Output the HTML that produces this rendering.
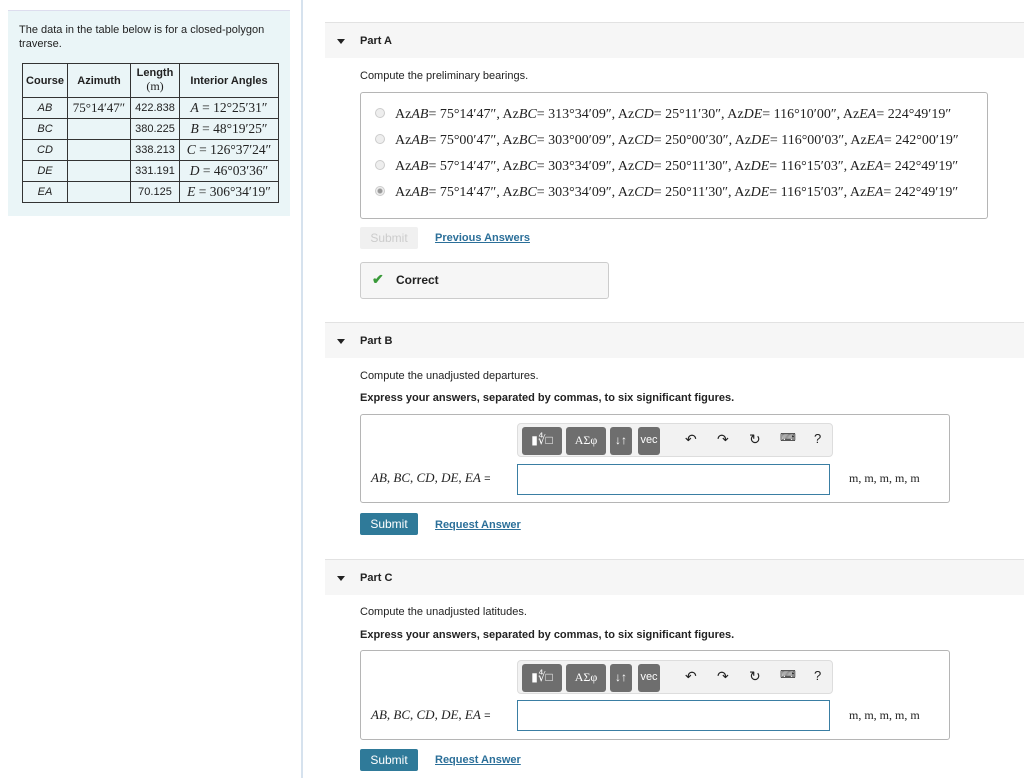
<!DOCTYPE html>
<html><head><meta charset="utf-8"><style>
*{box-sizing:border-box;margin:0;padding:0}
body{width:1024px;height:778px;background:#fff;font-family:"Liberation Sans",Arial,sans-serif;font-size:11px;color:#222;position:relative;overflow:hidden}
.abs{position:absolute}
.left{left:8px;top:10px;width:282px;height:206px;background:#eaf5f7;border-top:1px solid #dde}
table{position:absolute;left:14px;top:52px;border-collapse:collapse;font-size:11px;background:#eaf5f7}
td,th{border:1px solid #333;height:21px;padding:0 3px;text-align:center}
th{height:34px;font-weight:bold}
td.c{font-style:italic;}
.ser{font-family:"Liberation Serif","DejaVu Serif",serif;font-size:13.5px}
.divider{left:301px;top:0;width:2px;height:778px;background:#d6e2ee}
.hdr{left:325px;width:699px;height:36px;background:#f6f6f6;border-top:1px solid #e2e2e2}
.hdr b{position:absolute;left:35px;top:12px;font-size:11px}
.hdr i{position:absolute;left:12px;top:16px;width:0;height:0;border-left:4px solid transparent;border-right:4px solid transparent;border-top:5px solid #222}
.box{border:1px solid #b5b5b5;border-radius:3px;background:#fff}
.opt{position:absolute;left:14px;font-family:"Liberation Serif",serif;font-size:14px;white-space:nowrap}
.opt span.r{display:inline-block;width:10px;height:10px;border-radius:50%;border:1px solid #ccc;background:#eee;margin-right:10px;vertical-align:0px}
.btn{background:#2f7a99;color:#fff;font-size:12px;text-align:center;line-height:22px;border-radius:2px;width:58px;height:22px}
.lnk{color:#2b6f99;font-weight:bold;text-decoration:underline;font-size:11px}
.tb{height:34px;width:316px;background:#f2f2f2;border:1px solid #ddd;border-radius:4px}
.tk{position:absolute;top:3px;height:28px;background:#6e6e6e;color:#fff;border-radius:3px;text-align:center;line-height:26px;font-size:12px}
.ic{position:absolute;top:7px;font-size:14px;color:#222}
.inp{width:313px;height:31px;border:1px solid #3a7ea3;background:#fff}
</style></head><body>
<div class="abs left">
<div class="abs" style="left:11px;top:12px;font-size:11px;line-height:14px;width:260px">The data in the table below is for a closed-polygon traverse.</div>
<table>
<tr><th style="width:45px">Course</th><th style="width:63px">Azimuth</th><th style="width:49px">Length<br><span class="ser" style="font-size:12px;font-weight:normal">(m)</span></th><th style="width:99px">Interior Angles</th></tr>
<tr><td class="c">AB</td><td class="ser" style="font-size:13px;padding:0">75°14′47″</td><td>422.838</td><td class="ser"><i>A</i> = 12°25′31″</td></tr>
<tr><td class="c">BC</td><td></td><td>380.225</td><td class="ser"><i>B</i> = 48°19′25″</td></tr>
<tr><td class="c">CD</td><td></td><td>338.213</td><td class="ser"><i>C</i> = 126°37′24″</td></tr>
<tr><td class="c">DE</td><td></td><td>331.191</td><td class="ser"><i>D</i> = 46°03′36″</td></tr>
<tr><td class="c">EA</td><td></td><td>70.125</td><td class="ser"><i>E</i> = 306°34′19″</td></tr>
</table>
</div>
<div class="abs divider"></div>

<div class="abs hdr" style="top:22px"><i></i><b>Part A</b></div>
<div class="abs" style="left:360px;top:70px">Compute the preliminary bearings.</div>
<div class="abs box" style="left:360px;top:92px;width:628px;height:127px">
<div class="opt" style="top:14px"><span class="r"></span>Az<i>AB</i>= 75°14′47″, Az<i>BC</i>= 313°34′09″, Az<i>CD</i>= 25°11′30″, Az<i>DE</i>= 116°10′00″, Az<i>EA</i>= 224°49′19″</div>
<div class="opt" style="top:40px"><span class="r"></span>Az<i>AB</i>= 75°00′47″, Az<i>BC</i>= 303°00′09″, Az<i>CD</i>= 250°00′30″, Az<i>DE</i>= 116°00′03″, Az<i>EA</i>= 242°00′19″</div>
<div class="opt" style="top:66px"><span class="r"></span>Az<i>AB</i>= 57°14′47″, Az<i>BC</i>= 303°34′09″, Az<i>CD</i>= 250°11′30″, Az<i>DE</i>= 116°15′03″, Az<i>EA</i>= 242°49′19″</div>
<div class="opt" style="top:92px"><span class="r" style="background:radial-gradient(circle,#999 2px,#eee 3px)"></span>Az<i>AB</i>= 75°14′47″, Az<i>BC</i>= 303°34′09″, Az<i>CD</i>= 250°11′30″, Az<i>DE</i>= 116°15′03″, Az<i>EA</i>= 242°49′19″</div>
</div>
<div class="abs btn" style="left:360px;top:227px;background:#f0f0f0;color:#ccc">Submit</div>
<div class="abs lnk" style="left:435px;top:232px">Previous Answers</div>
<div class="abs box" style="left:360px;top:262px;width:249px;height:37px;background:#f6f6f6;border-color:#ccc">
<span class="abs" style="left:11px;top:8px;color:#3a9a3a;font-size:14px;font-weight:bold">✔</span>
<b class="abs" style="left:35px;top:10px;font-size:12px">Correct</b></div>

<div class="abs hdr" style="top:322px"><i></i><b>Part B</b></div>
<div class="abs" style="left:360px;top:370px">Compute the unadjusted departures.</div>
<div class="abs" style="left:360px;top:392px;font-weight:bold">Express your answers, separated by commas, to six significant figures.</div>
<div class="abs box" style="left:360px;top:414px;width:590px;height:89px">
<div class="abs tb" style="left:156px;top:8px">
<div class="tk" style="left:4px;width:40px">▮∜□</div><div class="tk" style="left:48px;width:40px;font-family:'Liberation Serif',serif">ΑΣφ</div><div class="tk" style="left:92px;width:22px">↓↑</div><div class="tk" style="left:120px;width:22px;font-size:11px">vec</div>
<span class="ic" style="left:167px">↶</span><span class="ic" style="left:199px">↷</span><span class="ic" style="left:231px">↻</span><span class="ic" style="left:262px;font-size:11px">⌨</span><span class="ic" style="left:296px;font-size:13px">?</span></div>
<div class="abs" style="left:10px;top:55px;font-family:'Liberation Serif',serif;font-size:13px"><i>AB</i>, <i>BC</i>, <i>CD</i>, <i>DE</i>, <i>EA</i> <span style="font-size:11px;font-family:'Liberation Sans'">=</span></div>
<div class="abs inp" style="left:156px;top:49px"></div>
<div class="abs" style="left:488px;top:56px;font-family:'Liberation Serif',serif;font-size:12px">m, m, m, m, m</div>
</div>
<div class="abs btn" style="left:360px;top:513px">Submit</div>
<div class="abs lnk" style="left:435px;top:519px">Request Answer</div>

<div class="abs hdr" style="top:559px"><i></i><b>Part C</b></div>
<div class="abs" style="left:360px;top:606px">Compute the unadjusted latitudes.</div>
<div class="abs" style="left:360px;top:629px;font-weight:bold">Express your answers, separated by commas, to six significant figures.</div>
<div class="abs box" style="left:360px;top:650px;width:590px;height:90px">
<div class="abs tb" style="left:156px;top:9px">
<div class="tk" style="left:4px;width:40px">▮∜□</div><div class="tk" style="left:48px;width:40px;font-family:'Liberation Serif',serif">ΑΣφ</div><div class="tk" style="left:92px;width:22px">↓↑</div><div class="tk" style="left:120px;width:22px;font-size:11px">vec</div>
<span class="ic" style="left:167px">↶</span><span class="ic" style="left:199px">↷</span><span class="ic" style="left:231px">↻</span><span class="ic" style="left:262px;font-size:11px">⌨</span><span class="ic" style="left:296px;font-size:13px">?</span></div>
<div class="abs" style="left:10px;top:56px;font-family:'Liberation Serif',serif;font-size:13px"><i>AB</i>, <i>BC</i>, <i>CD</i>, <i>DE</i>, <i>EA</i> <span style="font-size:11px;font-family:'Liberation Sans'">=</span></div>
<div class="abs inp" style="left:156px;top:49px"></div>
<div class="abs" style="left:488px;top:57px;font-family:'Liberation Serif',serif;font-size:12px">m, m, m, m, m</div>
</div>
<div class="abs btn" style="left:360px;top:749px">Submit</div>
<div class="abs lnk" style="left:435px;top:754px">Request Answer</div>
</body></html>
